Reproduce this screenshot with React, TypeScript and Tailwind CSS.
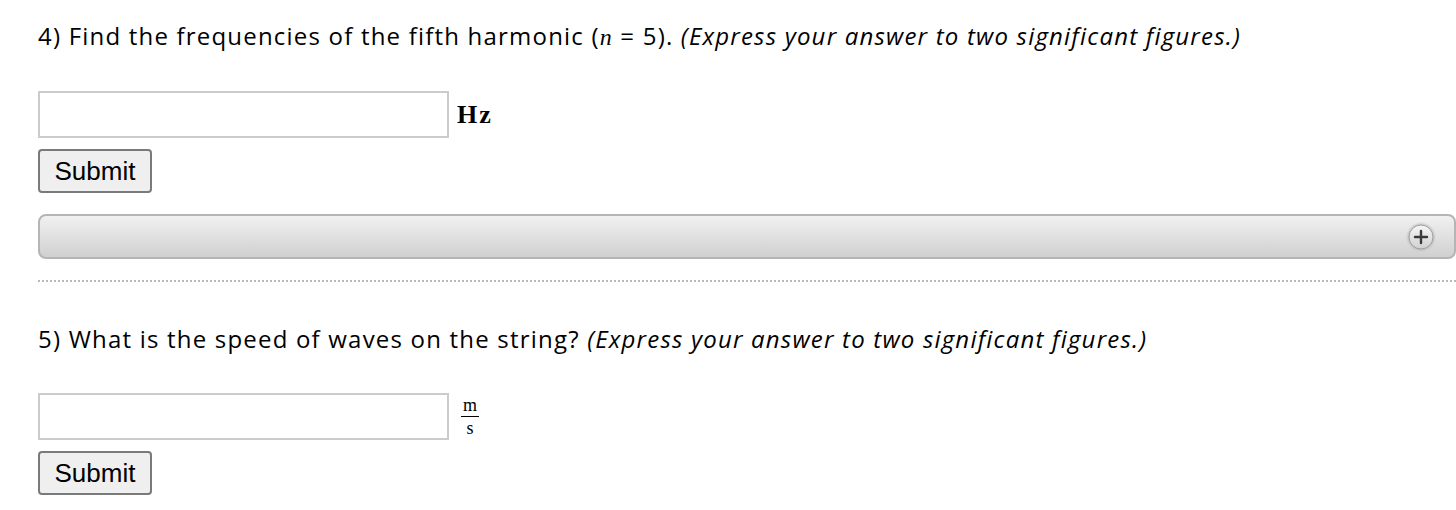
import React from "react";

function PlusIcon() {
  return (
    <svg width="32" height="32" viewBox="0 0 32 32" className="block">
      <defs>
        <radialGradient id="plusGlow" cx="50%" cy="50%" r="50%">
          <stop offset="72%" stopColor="#8f8f8f" stopOpacity="0.6" />
          <stop offset="100%" stopColor="#c4c4c4" stopOpacity="0" />
        </radialGradient>
        <linearGradient id="plusFace" x1="0" y1="0" x2="0" y2="1">
          <stop offset="0%" stopColor="#f6f6f6" />
          <stop offset="100%" stopColor="#d0d0d0" />
        </linearGradient>
      </defs>
      <circle cx="16" cy="16" r="15.5" fill="url(#plusGlow)" />
      <circle cx="16" cy="16" r="12" fill="url(#plusFace)" stroke="#a0a0a0" strokeWidth="1" />
      <path d="M16 10v12M10 16h12" stroke="#3a3a3a" strokeWidth="2.4" strokeLinecap="round" />
    </svg>
  );
}

function AnswerRow({ unit }: { unit: "hz" | "ms" }) {
  return (
    <div className="flex items-center">
      <input
        type="text"
        className="h-[47px] w-[411px] border-2 border-[#cccccc] bg-white outline-none"
      />
      {unit === "hz" ? (
        <span className="ml-[8px] text-[26px] font-bold leading-none tracking-[2px] text-black [font-family:'Liberation_Serif',serif]">
          Hz
        </span>
      ) : (
        <span className="ml-[12px] inline-flex flex-col items-center text-[18px] leading-[18px] text-black [font-family:'Liberation_Serif',serif]">
          <span className="border-b border-black px-[2px] pb-[2px]">m</span>
          <span className="pt-[2px]">s</span>
        </span>
      )}
    </div>
  );
}

function SubmitButton() {
  return (
    <button
      type="button"
      className="flex h-[44px] w-[114px] items-center justify-center rounded-[4px] border-2 border-[#7a7a7a] bg-[#efefef] text-[26px] text-black [font-family:'Liberation_Sans',Arial,sans-serif]"
    >
      Submit
    </button>
  );
}

export default function App() {
  return (
    <div className="h-[510px] w-[1456px] overflow-hidden bg-white pl-[38px] pt-[21px] text-black [font-family:'Open_Sans',sans-serif]">
      <p className="whitespace-nowrap text-[24px] leading-[30px] tracking-[1.2px]">
        4) Find the frequencies of the fifth harmonic (
        <span className="italic [font-family:'Liberation_Serif',serif]">n</span> = 5).{" "}
        <span className="italic">(Express your answer to two significant figures.)</span>
      </p>

      <div className="mt-[39px]">
        <AnswerRow unit="hz" />
      </div>
      <div className="mt-[11px]">
        <SubmitButton />
      </div>

      <div className="mt-[21px] flex h-[45px] items-center justify-end rounded-[8px] border-2 border-[#b5b5b5] bg-gradient-to-b from-[#f1f1f1] to-[#d0d0d0] pr-[17px]">
        <PlusIcon />
      </div>

      <div className="mt-[21px] border-t-2 border-dotted border-[#b8b8b8]" />

      <p className="mt-[42px] whitespace-nowrap text-[24px] leading-[30px] tracking-[1.2px]">
        5) What is the speed of waves on the string?{" "}
        <span className="italic">(Express your answer to two significant figures.)</span>
      </p>

      <div className="mt-[39px]">
        <AnswerRow unit="ms" />
      </div>
      <div className="mt-[11px]">
        <SubmitButton />
      </div>
    </div>
  );
}
